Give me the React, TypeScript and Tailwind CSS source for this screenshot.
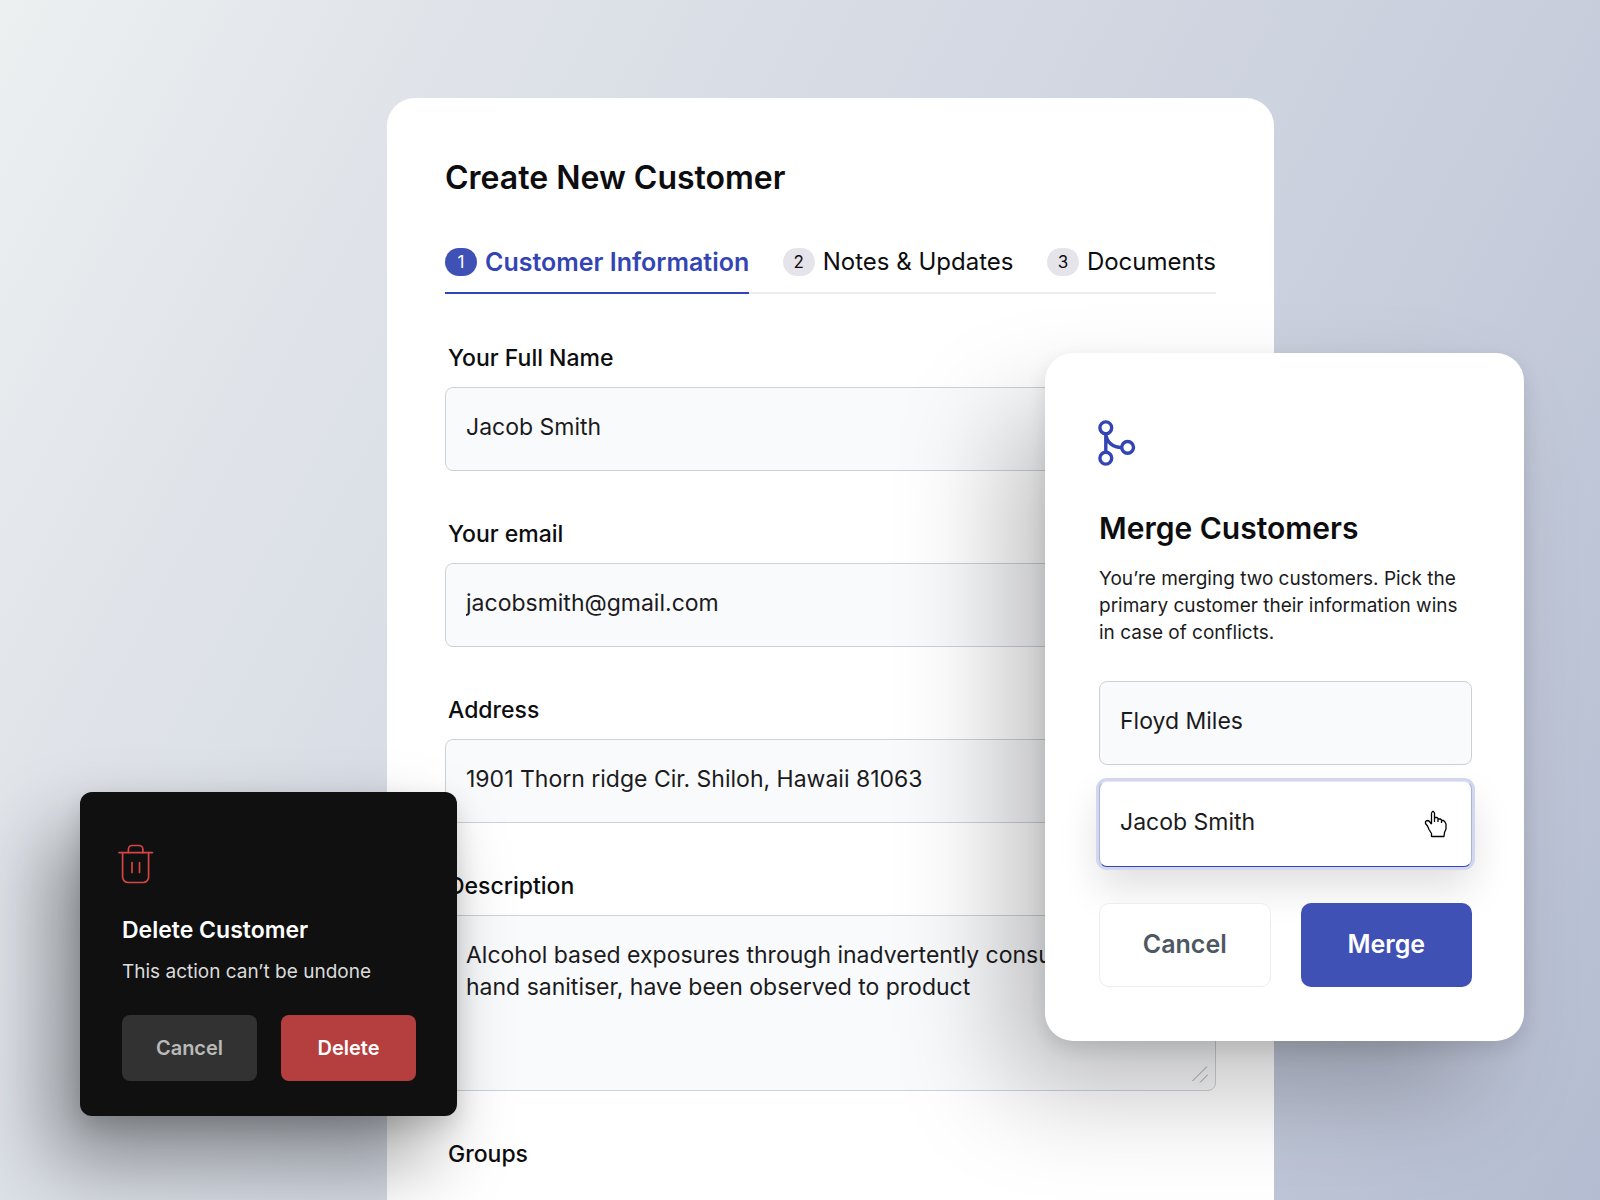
import type { ReactNode } from "react";
import clsx from "clsx";

const STEPS = ["Customer Information", "Notes & Updates", "Documents"];

const fieldBox =
  "block w-full rounded-lg border border-[#cdd0d5] bg-[#f9fafc] px-5 text-[23px] text-[#1b1b1d] outline-none";

function Field({ id, label, children }: { id: string; label: string; children: ReactNode }) {
  return (
    <div>
      <label htmlFor={id} className="mb-[13px] block pl-[3px] text-[23px] leading-8 font-medium text-[#0d0d0f]">
        {label}
      </label>
      {children}
    </div>
  );
}

function MergeIcon() {
  return (
    <svg
      className="overflow-visible"
      width="38"
      height="46"
      viewBox="0 0 38 46"
      fill="none"
      stroke="#3345b5"
      strokeWidth="3.4"
      aria-hidden="true"
    >
      <circle cx="6.8" cy="7.8" r="5.9" />
      <circle cx="6.8" cy="38.2" r="5.9" />
      <circle cx="28.6" cy="27.4" r="5.9" />
      <path d="M6.8 13.7v18.6M6.8 14c.8 8.200 7 13.600 16.100 13.600" />
    </svg>
  );
}

function TrashIcon() {
  return (
    <svg
      width="36"
      height="40"
      viewBox="0 0 36 40"
      fill="none"
      stroke="#d64545"
      strokeWidth="1.7"
      strokeLinecap="round"
      aria-hidden="true"
    >
      <path d="M1 8.600h33.500" />
      <path d="M10.400 8.600V5.500a4 4 0 0 1 4-4h6.500a4 4 0 0 1 4 4v3.100" />
      <path d="M4.600 8.600v24.400a5.500 5.500 0 0 0 5.500 5.500h15a5.500 5.500 0 0 0 5.500-5.500V8.600" />
      <path d="M14 18.500v10M21.500 18.500v10" />
    </svg>
  );
}

function HandCursor() {
  return (
    <svg
      className="pointer-events-none absolute top-1/2 right-6 -translate-y-1/2"
      width="24"
      height="28"
      viewBox="0 0 24 28"
      fill="#fff"
      stroke="#000"
      strokeWidth="1.3"
      strokeLinejoin="bevel"
      aria-hidden="true"
    >
      <path d="M7.500 26.500v-3L5 19.500 3.500 16 1.500 13.500v-2l1.500-1 2 .5 2.500 3V3l1-1.500h1L10.500 3v9V7.500h2.500l1 1V12 9h2.500l1 1v3-2.500h2l1.500 1.500 1 2v5l-1.500 3.500-.5 4z" />
    </svg>
  );
}

function DeleteDialog() {
  return (
    <section
      role="dialog"
      aria-labelledby="delete-title"
      className="absolute top-[792px] left-20 w-[377px] rounded-xl bg-[#101010] pt-[52px] pr-[41px] pb-[35px] pl-[42px] shadow-[-28px_44px_80px_rgba(0,0,0,0.4),0_10px_24px_rgba(0,0,0,0.14)]"
    >
      <div className="-ml-1">
        <TrashIcon />
      </div>
      <h2 id="delete-title" className="mt-7 text-[23px] leading-9 font-semibold text-white">
        Delete Customer
      </h2>
      <p className="mt-2 text-[19px] leading-8 text-[#dcdcdc]">This action can’t be undone</p>
      <div className="mt-[27px] grid grid-cols-2 gap-6 text-[20px] font-semibold">
        <button type="button" className="h-[66px] rounded-lg bg-[#323232] text-[#b9b9b9]">
          Cancel
        </button>
        <button type="button" className="h-[66px] rounded-lg bg-[#b53e3e] text-white">
          Delete
        </button>
      </div>
    </section>
  );
}

function MergeDialog() {
  return (
    <section
      role="dialog"
      aria-labelledby="merge-title"
      className="absolute top-[353px] right-[76px] w-[479px] rounded-[28px] bg-white pt-[67px] pr-[52px] pb-[54px] pl-[54px] shadow-[-48px_56px_110px_-10px_rgba(0,0,0,0.26),0_8px_20px_rgba(0,0,0,0.11)]"
    >
      <MergeIcon />
      <h2 id="merge-title" className="mt-10 text-[30px] leading-[44px] font-semibold text-[#0d0d0f]">
        Merge Customers
      </h2>
      <p className="mt-[15px] text-[19px] leading-[27px] text-[#1b1b1d]">
        You’re merging two customers. Pick the primary customer their information wins in case of conflicts.
      </p>
      <input
        aria-label="First customer"
        defaultValue="Floyd Miles"
        className={clsx(fieldBox, "mt-[35px] h-[84px] pb-1")}
      />
      <div className="relative mt-4">
        <input
          aria-label="Primary customer"
          defaultValue="Jacob Smith"
          className="block h-[86px] w-full rounded-lg border border-[#a9b1de] border-t-[#e3e6f5] border-b-[#3345b5] bg-white px-5 pb-1 text-[23px] text-[#1b1b1d] shadow-[0_0_0_3px_#d2d7ee,0_20px_40px_rgba(0,0,0,0.13)] outline-none"
        />
        <HandCursor />
      </div>
      <div className="relative mt-9 grid grid-cols-2 gap-[30px] text-[25px] font-semibold">
        <button type="button" className="h-[84px] rounded-[10px] border border-[#ececf4] bg-white text-[#4d5863]">
          Cancel
        </button>
        <button type="button" className="h-[84px] rounded-[10px] bg-[#3f51b5] text-white">
          Merge
        </button>
      </div>
    </section>
  );
}

export default function App() {
  return (
    <div className="relative flex min-h-screen overflow-hidden bg-linear-[118deg,#ecf0f1_0%,#dfe3e9_22%,#c8cedc_70%,#b4bcd1_100%] pt-[98px] pr-[326px] pl-[387px] font-['Inter',sans-serif]">
      <main className="flex-1 rounded-t-[28px] bg-white px-[58px] pt-[58px]">
        <h1 className="text-[32px] leading-[44px] font-semibold text-[#0d0d0f]">Create New Customer</h1>

        <nav className="mt-9 flex justify-between border-b-2 border-[#ededf0] whitespace-nowrap">
          {STEPS.map((step, i) => (
            <a
              key={step}
              href="#"
              className={clsx(
                "-mb-0.5 flex items-center gap-2 border-b-2 pt-2 pb-3 leading-9",
                i === 0
                  ? "border-[#3345b5] text-[25px] font-semibold text-[#3345b5]"
                  : "border-transparent text-[24px] text-[#0d0d0f]",
              )}
            >
              <span
                className={clsx(
                  "flex h-7 w-8 items-center justify-center rounded-full text-[17px] font-normal",
                  i === 0 ? "bg-[#3f51b5] text-white" : "bg-[#e5e4eb]",
                )}
              >
                {i + 1}
              </span>
              {step}
            </a>
          ))}
        </nav>

        <form className="mt-12 flex flex-col gap-[47px]">
          <Field id="name" label="Your Full Name">
            <input id="name" defaultValue="Jacob Smith" className={clsx(fieldBox, "h-[84px] pb-1")} />
          </Field>
          <Field id="email" label="Your email">
            <input id="email" type="email" defaultValue="jacobsmith@gmail.com" className={clsx(fieldBox, "h-[84px] pb-1")} />
          </Field>
          <Field id="address" label="Address">
            <input
              id="address"
              defaultValue="1901 Thorn ridge Cir. Shiloh, Hawaii 81063"
              className={clsx(fieldBox, "h-[84px] pb-1")}
            />
          </Field>
          <Field id="description" label="Description">
            <div className="relative">
              <textarea
                id="description"
                defaultValue={"Alcohol based exposures through inadvertently consumed\nhand sanitiser, have been observed to product"}
                className={clsx(fieldBox, "h-[176px] resize-none pt-[23px] leading-8")}
              />
              <svg
                className="pointer-events-none absolute right-2 bottom-2"
                width="16"
                height="18"
                viewBox="0 0 16 18"
                fill="none"
                stroke="#9a9ea5"
                strokeWidth="1"
                aria-hidden="true"
              >
                <path d="M.5 16 15 1.500M8 17.500l8-8" />
              </svg>
            </div>
          </Field>
          <h2 className="pl-[3px] text-[23px] leading-8 font-medium text-[#0d0d0f]">Groups</h2>
        </form>
      </main>

      <DeleteDialog />
      <MergeDialog />
    </div>
  );
}
